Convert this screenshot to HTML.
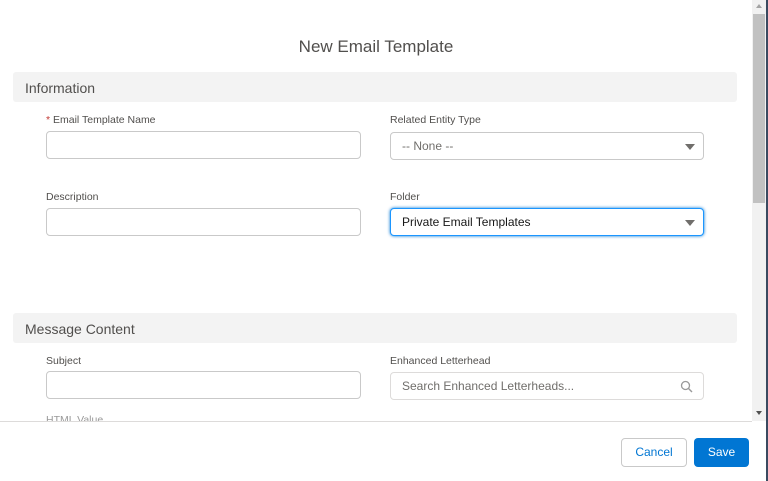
<!DOCTYPE html>
<html><head><style>
*{box-sizing:border-box;margin:0;padding:0}
body{width:768px;height:481px;overflow:hidden;background:#fff;font-family:"Liberation Sans",sans-serif;position:relative;color:#3e3e3c}
.a{position:absolute}
.title{left:0;width:752px;top:37px;text-align:center;font-size:17px;color:#514f4d}
.sec{left:13px;width:724px;height:30px;background:#f3f3f3;border-radius:3px;font-size:14px;padding:8px 12px;color:#514f4d}
.lbl{font-size:10.5px;color:#514f4d}
.inp{border:1px solid #c9c9c9;border-radius:4px;height:28px;background:#fff;font-size:12px;padding:6px 11px;color:#3e3e3c}
.caret{position:absolute;right:8px;top:11px;width:0;height:0;border-left:5px solid transparent;border-right:5px solid transparent;border-top:6px solid #706e6b}
</style></head><body>
<div class="a title">New Email Template</div>
<div class="a sec" style="top:72px">Information</div>
<div class="a lbl" style="left:46px;top:114px"><span style="color:#c23934">*</span> Email Template Name</div>
<div class="a inp" style="left:46px;top:131px;width:315px"></div>
<div class="a lbl" style="left:390px;top:114px">Related Entity Type</div>
<div class="a inp" style="left:390px;top:132px;width:314px;color:#706e6b">-- None --<span class="caret"></span></div>
<div class="a lbl" style="left:46px;top:191px">Description</div>
<div class="a inp" style="left:46px;top:208px;width:315px"></div>
<div class="a lbl" style="left:390px;top:191px">Folder</div>
<div class="a inp" style="left:390px;top:208px;width:314px;border-color:#1b96ff;box-shadow:0 0 3px #0176d3;color:#181818">Private Email Templates<span class="caret"></span></div>
<div class="a sec" style="top:313px">Message Content</div>
<div class="a lbl" style="left:46px;top:355px">Subject</div>
<div class="a inp" style="left:46px;top:371px;width:315px"></div>
<div class="a lbl" style="left:390px;top:355px">Enhanced Letterhead</div>
<div class="a inp" style="left:390px;top:372px;width:314px;border-color:#dddbda;color:#706e6b">Search Enhanced Letterheads...
<svg style="position:absolute;right:10px;top:7px" width="13" height="13" viewBox="0 0 13 13"><circle cx="5.5" cy="5.5" r="4" fill="none" stroke="#9a9a9a" stroke-width="1.3"/><path d="M8.5 8.5L12 12" stroke="#9a9a9a" stroke-width="1.4"/></svg></div>
<div class="a lbl" style="left:46px;top:415px;height:6px;overflow:hidden;line-height:11px;color:#999">HTML Value</div>
<div class="a" style="left:0;top:421px;width:752px;height:60px;background:#fff;border-top:1px solid #dddbda"></div>
<div class="a" style="left:621px;top:438px;width:66px;height:29px;border:1px solid #c9c9c9;border-radius:4px;color:#0176d3;font-size:12px;text-align:center;line-height:27px">Cancel</div>
<div class="a" style="left:694px;top:438px;width:55px;height:29px;background:#0176d3;border-radius:4px;color:#fff;font-size:12px;text-align:center;line-height:29px">Save</div>
<div class="a" style="left:752px;top:0;width:14px;height:421px;background:#f1f1f1"></div>
<div class="a" style="left:753px;top:14px;width:12px;height:189px;background:#c1c1c1"></div>
<div class="a" style="left:756px;top:4px;width:0;height:0;border-left:3px solid transparent;border-right:3px solid transparent;border-bottom:4px solid #a3a3a3"></div>
<div class="a" style="left:756px;top:411px;width:0;height:0;border-left:3px solid transparent;border-right:3px solid transparent;border-top:4px solid #505050"></div>
<div class="a" style="left:766px;top:0;width:2px;height:481px;background:#3a4a60"></div>
</body></html>
